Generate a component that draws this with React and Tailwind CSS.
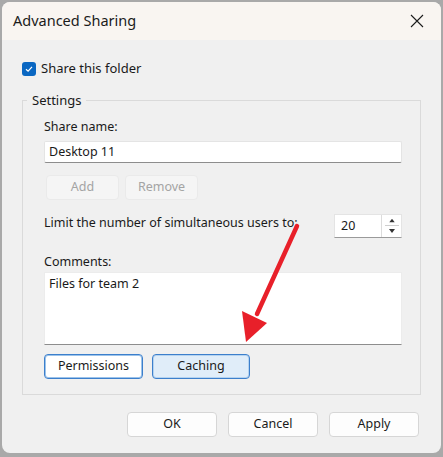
import React from 'react'

const font = { fontFamily: '"Noto Sans", "Open Sans", sans-serif' }

function Btn({ children, className = '' }){
  return (
    <button type="button" className={`h-[25px] rounded-[4px] border text-[12.5px] leading-none ${className}`}>{children}</button>
  )
}

export default function App(){
  return (
    <div className="w-[443px] h-[457px] bg-[#a9a9a9] p-[2px] pb-[4px] text-[#1a1a1a]" style={font}>
      <div className="relative h-full rounded-[8px] overflow-hidden flex flex-col bg-[#f0f0f0]">
        {/* title bar */}
        <div className="h-[38px] shrink-0 bg-[#f9f5f1] flex items-center justify-between pl-[11px] pr-[14px]">
          <span className="text-[14.5px] text-[#1b1b1b]">Advanced Sharing</span>
          <svg width="14" height="14" viewBox="0 0 14 14" className="mr-[3px]">
            <path d="M1 1 L13 13 M13 1 L1 13" stroke="#1c1c1c" strokeWidth="1.1" />
          </svg>
        </div>

        <div className="flex-1 flex flex-col px-[20px]">
          {/* checkbox */}
          <div className="flex items-center gap-[5px] mt-[21px] h-[16px]">
            <span className="w-[14px] h-[14px] rounded-[3px] bg-[#0a67c2] flex items-center justify-center">
              <svg width="10" height="10" viewBox="0 0 10 10">
                <path d="M2 5.2 L4.1 7.2 L8 2.8" fill="none" stroke="white" strokeWidth="1.2" />
              </svg>
            </span>
            <span className="text-[13px]">Share this folder</span>
          </div>

          {/* settings group */}
          <fieldset className="mt-[14px] border border-[#dadada] h-[304px] px-[21px] pr-[18px]">
            <legend className="-ml-[17px] px-[5px] text-[13px] leading-[18px]">Settings</legend>
            <div className="text-[12.5px] mt-[9px] leading-[18px]">Share name:</div>
            <div className="mt-[5px] h-[22px] bg-white border border-[#e4e4e4] border-b-[#8d8d8d] rounded-[2px] flex items-center px-[4px] text-[12.5px]">Desktop 11</div>
            <div className="flex gap-[6px] mt-[12px] ml-[2px]">
              <Btn className="w-[73px] h-[23px] bg-[#f5f5f5] border-[#eaeaea] text-[#a4a4a4]">Add</Btn>
              <Btn className="w-[73px] h-[23px] bg-[#f5f5f5] border-[#eaeaea] text-[#a4a4a4]">Remove</Btn>
            </div>
            <div className="flex items-center justify-between mt-[14px] h-[24px]">
              <span className="text-[12.5px] -mt-[6px]">Limit the number of simultaneous users to:</span>
              <div className="w-[68px] h-[24px] bg-white border border-[#e4e4e4] border-b-[#9a9a9a] flex">
                <span className="flex-1 pl-[6px] text-[12.5px] leading-[22px]">20</span>
                <div className="w-[20px] border-l border-[#dcdcdc] flex flex-col items-center justify-center gap-[1px]">
                  <svg width="14" height="10" viewBox="0 0 14 10" className="border-b border-[#cfcfcf]">
                    <path d="M4 7 L7 3 L10 7 Z" fill="#333" />
                  </svg>
                  <svg width="14" height="9" viewBox="0 0 14 9">
                    <path d="M4 2 L7 6 L10 2 Z" fill="#333" />
                  </svg>
                </div>
              </div>
            </div>
            <div className="text-[12.5px] mt-[15px] leading-[18px]">Comments:</div>
            <div className="mt-[1px] h-[73px] bg-white border border-[#ececec] border-b-[#8d8d8d] px-[4px] pt-[1px] text-[12.5px] leading-[20px]">Files for team 2</div>
            <div className="flex gap-[9px] mt-[9px]">
              <Btn className="w-[99px] bg-white border-[#3c7fcc] shadow-[inset_0_0_0_1px_#9cc3ea]">Permissions</Btn>
              <Btn className="w-[98px] bg-[#e0edf9] border-[#3c7fcc] shadow-[inset_0_0_0_1px_#b5d3f0]">Caching</Btn>
            </div>
          </fieldset>

          {/* dialog buttons */}
          <div className="flex justify-end gap-[11px] mt-[17px] pr-[2px]">
            <Btn className="w-[90px] bg-[#fdfdfd] border-[#d6d6d6]">OK</Btn>
            <Btn className="w-[90px] bg-[#fdfdfd] border-[#d6d6d6]">Cancel</Btn>
            <Btn className="w-[90px] bg-[#fdfdfd] border-[#d6d6d6]">Apply</Btn>
          </div>
        </div>

        {/* red annotation arrow */}
        <svg className="absolute left-0 top-0 pointer-events-none" width="439" height="451" viewBox="2 2 439 451">
          <path d="M297 226 L257 314" stroke="#e8202a" strokeWidth="4.5" strokeLinecap="round" />
          <path d="M242 311 L267 323 L246 342 Z" fill="#e8202a" />
        </svg>
      </div>
    </div>
  )
}
